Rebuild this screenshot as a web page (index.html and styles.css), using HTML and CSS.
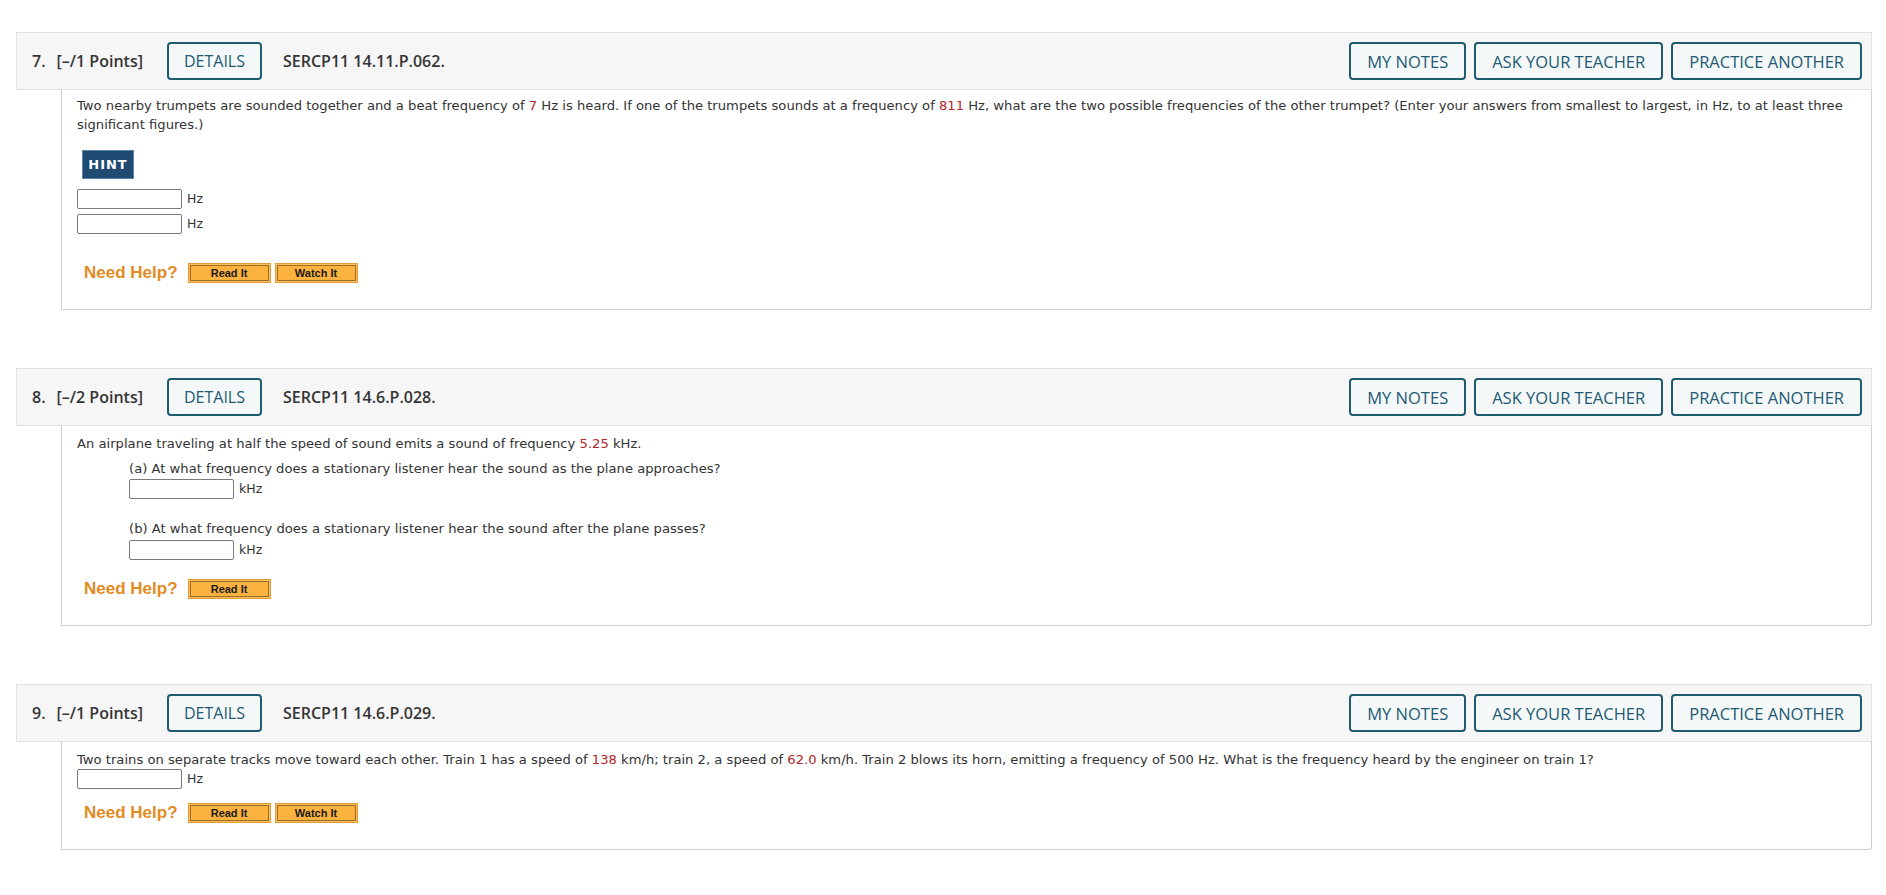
FILE: index.html
```html
<!DOCTYPE html>
<html>
<head>
<meta charset="utf-8">
<link rel="stylesheet" href="styles.css">
</head>
<body>
<div class="page">

  <div class="question">
    <div class="q-header">
      <span class="q-num">7.</span>
      <span class="q-points">[–/1 Points]</span>
      <span class="btn btn-details">DETAILS</span>
      <span class="q-code">SERCP11 14.11.P.062.</span>
      <div class="q-actions">
        <span class="btn">MY NOTES</span>
        <span class="btn">ASK YOUR TEACHER</span>
        <span class="btn">PRACTICE ANOTHER</span>
      </div>
    </div>
    <div class="q-body q7">
      <p class="q-text">Two nearby trumpets are sounded together and a beat frequency of <span class="num">7</span> Hz is heard. If one of the trumpets sounds at a frequency of <span class="num">811</span> Hz, what are the two possible frequencies of the other trumpet? (Enter your answers from smallest to largest, in Hz, to at least three significant figures.)</p>
      <div class="hint">HINT</div>
      <div class="answers">
        <div class="answer"><span class="input"></span><span class="unit">Hz</span></div>
        <div class="answer"><span class="input"></span><span class="unit">Hz</span></div>
      </div>
      <div class="help help-7">
        <span class="help-label">Need Help?</span>
        <span class="help-btn">Read It</span>
        <span class="help-btn">Watch It</span>
      </div>
    </div>
  </div>

  <div class="question">
    <div class="q-header">
      <span class="q-num">8.</span>
      <span class="q-points">[–/2 Points]</span>
      <span class="btn btn-details">DETAILS</span>
      <span class="q-code">SERCP11 14.6.P.028.</span>
      <div class="q-actions">
        <span class="btn">MY NOTES</span>
        <span class="btn">ASK YOUR TEACHER</span>
        <span class="btn">PRACTICE ANOTHER</span>
      </div>
    </div>
    <div class="q-body">
      <p class="q-text">An airplane traveling at half the speed of sound emits a sound of frequency <span class="num">5.25</span> kHz.</p>
      <div class="part part-a">
        <p class="part-text">(a) At what frequency does a stationary listener hear the sound as the plane approaches?</p>
        <div class="answer answer-tight"><span class="input"></span><span class="unit">kHz</span></div>
      </div>
      <div class="part part-b">
        <p class="part-text">(b) At what frequency does a stationary listener hear the sound after the plane passes?</p>
        <div class="answer answer-b"><span class="input"></span><span class="unit">kHz</span></div>
      </div>
      <div class="help help-8">
        <span class="help-label">Need Help?</span>
        <span class="help-btn">Read It</span>
      </div>
    </div>
  </div>

  <div class="question">
    <div class="q-header">
      <span class="q-num">9.</span>
      <span class="q-points">[–/1 Points]</span>
      <span class="btn btn-details">DETAILS</span>
      <span class="q-code">SERCP11 14.6.P.029.</span>
      <div class="q-actions">
        <span class="btn">MY NOTES</span>
        <span class="btn">ASK YOUR TEACHER</span>
        <span class="btn">PRACTICE ANOTHER</span>
      </div>
    </div>
    <div class="q-body">
      <p class="q-text">Two trains on separate tracks move toward each other. Train 1 has a speed of <span class="num">138</span> km/h; train 2, a speed of <span class="num">62.0</span> km/h. Train 2 blows its horn, emitting a frequency of 500 Hz. What is the frequency heard by the engineer on train 1?</p>
      <div class="answer"><span class="input"></span><span class="unit">Hz</span></div>
      <div class="help help-9">
        <span class="help-label">Need Help?</span>
        <span class="help-btn">Read It</span>
        <span class="help-btn">Watch It</span>
      </div>
    </div>
  </div>

</div>
</body>
</html>
```
FILE: styles.css
```css
html, body {
  margin: 0;
  padding: 0;
  background: #ffffff;
}

.page {
  padding: 32px 14px 0 16px;
}

.question {
  margin-bottom: 58px;
}

.q-header {
  display: flex;
  align-items: center;
  box-sizing: border-box;
  height: 58px;
  padding: 0 9px 0 15px;
  background: #f6f6f6;
  border: 1px solid #e2e2e2;
  font-family: "Open Sans", "Liberation Sans", sans-serif;
  font-size: 16px;
  color: #353535;
}

.q-num {
  font-weight: 600;
  margin-right: 11px;
}

.q-points {
  font-weight: 600;
  margin-right: 24px;
}

.q-code {
  font-weight: 600;
  margin-left: 21px;
}

.btn {
  display: inline-flex;
  align-items: center;
  box-sizing: border-box;
  height: 38px;
  padding: 0 16px;
  border: 2px solid #1f5c72;
  border-radius: 4px;
  background: #f5f8f9;
  color: #215a72;
  font-family: "Open Sans", "Liberation Sans", sans-serif;
  font-size: 16.5px;
  font-weight: 400;
  white-space: nowrap;
}

.btn-details {
  padding: 0 15px;
  font-size: 16px;
}

.q-actions {
  margin-left: auto;
  display: flex;
  gap: 8px;
}

.q-body {
  margin-left: 45px;
  padding: 8px 15px 26px 15px;
  border: 1px solid #cfcfcf;
  border-top: none;
  border-radius: 0 0 3px 0;
  font-family: "DejaVu Sans", Verdana, sans-serif;
  font-size: 13.15px;
  line-height: 18px;
  color: #333333;
}

.q7 {
  padding-top: 6px;
}

.q-text {
  margin: 0;
  line-height: 19px;
}

.num {
  color: #b3262b;
}

.hint {
  display: inline-block;
  box-sizing: border-box;
  width: 52px;
  height: 29px;
  margin: 16px 0 0 5px;
  background: #1f4a72;
  border: 1px solid #5b84aa;
  color: #ffffff;
  font-family: "DejaVu Sans", Verdana, sans-serif;
  font-weight: bold;
  font-size: 13px;
  letter-spacing: 1px;
  line-height: 27px;
  text-align: center;
}

.answers {
  margin-top: 10px;
  display: flex;
  flex-direction: column;
  gap: 5px;
}

.answer {
  display: flex;
  align-items: center;
  height: 20px;
}

.input {
  display: inline-block;
  box-sizing: border-box;
  width: 105px;
  height: 20px;
  border: 1px solid #7a7a7a;
  border-radius: 2px;
  background: #ffffff;
}

.unit {
  margin-left: 5px;
  font-size: 12.5px;
}

.part {
  margin-left: 52px;
}

.part-a {
  margin-top: 7px;
}

.part-b {
  margin-top: 21px;
}

.part-text {
  margin: 0;
}

.answer-tight {
  margin-top: 1px;
}

.answer-b {
  margin-top: 2px;
}

.help {
  display: flex;
  align-items: center;
  height: 20px;
  margin-left: 7px;
}

.help-7 {
  margin-top: 29px;
}

.help-8 {
  margin-top: 19px;
}

.help-9 {
  margin-top: 14px;
}

.help-label {
  font-family: "Liberation Sans", Arial, sans-serif;
  font-weight: bold;
  font-size: 17px;
  color: #e38b22;
  margin-right: 10px;
}

.help-btn {
  display: inline-flex;
  align-items: center;
  justify-content: center;
  box-sizing: border-box;
  width: 83px;
  height: 20px;
  margin-right: 4px;
  background: #fbb23e;
  border: 1px solid #e59a35;
  box-shadow: inset 0 0 0 1px #fcc262, inset 0 0 0 2px #9c6a23;
  font-family: "Liberation Sans", Arial, sans-serif;
  font-weight: bold;
  font-size: 11px;
  color: #1a1a1a;
}
```
